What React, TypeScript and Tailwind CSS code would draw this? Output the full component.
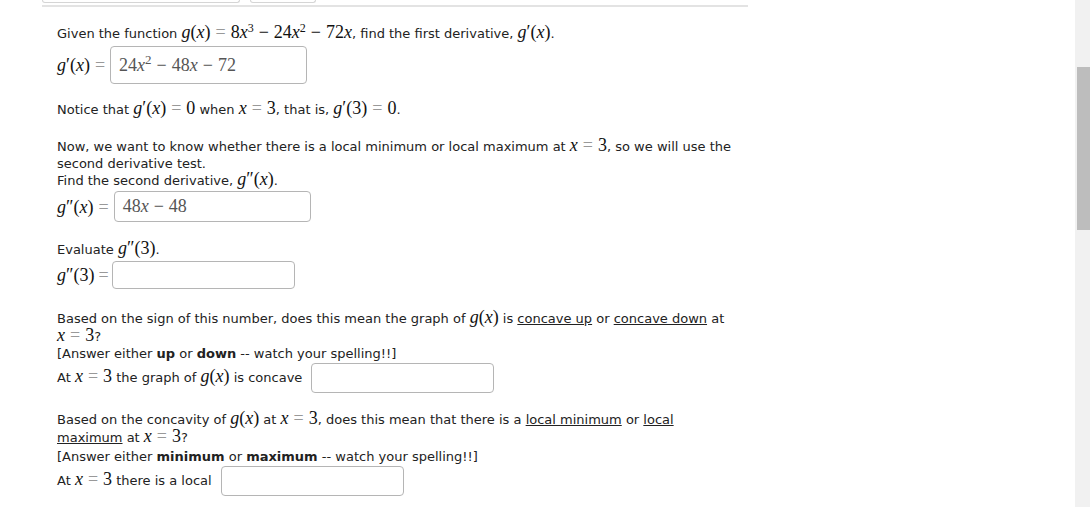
import type { ReactNode } from "react";

const sans = "[font-family:'DejaVu_Sans',Verdana,sans-serif]";
const serif = "[font-family:'Liberation_Serif','DejaVu_Serif',serif]";

// inline math inside running text: zero leading so it never stretches the line
function M({ children }: { children: ReactNode }) {
  return <span className={`${serif} text-[18px] leading-[0px] text-[#111]`}>{children}</span>;
}

// math label in front of an answer box
function ML({ children }: { children: ReactNode }) {
  return <span className={`${serif} text-[18px] leading-[20px] text-[#111]`}>{children}</span>;
}

function I({ children }: { children: ReactNode }) {
  return <i className="italic">{children}</i>;
}

function Eq() {
  return <span className="mx-[5px] text-[#999]">=</span>;
}

function Minus() {
  return <span className="mx-[5px]">−</span>;
}

function AnswerBox({
  width,
  height,
  value,
}: {
  width: string;
  height: string;
  value?: ReactNode;
}) {
  return (
    <div
      className={`${width} ${height} flex items-center rounded-[4px] border border-[#b5b5b5] bg-white pl-[8px] ${serif} text-[18px] text-[#555]`}
    >
      {value}
    </div>
  );
}

export default function App() {
  return (
    <div className={`flex h-[507px] w-[1090px] overflow-hidden bg-white ${sans} text-[13px] text-[#222]`}>
      <div className="flex-1">
        <div className="flex gap-[10px] pl-[42px]">
          <div className="h-[3px] w-[198px] rounded-b-[4px] border border-t-0 border-[#d5d5d5]" />
          <div className="h-[3px] w-[66px] rounded-b-[4px] border border-t-0 border-[#d5d5d5]" />
        </div>
        <div className="ml-[42px] mt-[2px] w-[706px] border-t-2 border-[#e3e3e3]" />

        <div className="pl-[57px]">
          <p className="mt-[17px] leading-[20px]">
            Given the function{" "}
            <M>
              <I>g</I>(<I>x</I>)<Eq />8<I>x</I>
              <sup className="text-[12px]">3</sup>
              <Minus />
              24<I>x</I>
              <sup className="text-[12px]">2</sup>
              <Minus />
              72<I>x</I>
            </M>
            , find the first derivative,{" "}
            <M>
              <I>g</I>′(<I>x</I>)
            </M>
            .
          </p>
          <div className="mt-[2px] flex items-center">
            <ML>
              <I>g</I>′(<I>x</I>)<Eq />
            </ML>
            <AnswerBox
              width="w-[197px]"
              height="h-[38px]"
              value={
                <span>
                  24<I>x</I>
                  <sup className="text-[13px]">2</sup>
                  <Minus />
                  48<I>x</I>
                  <Minus />
                  72
                </span>
              }
            />
          </div>

          <p className="mt-[16px] leading-[20px]">
            Notice that{" "}
            <M>
              <I>g</I>′(<I>x</I>)<Eq />0
            </M>{" "}
            when{" "}
            <M>
              <I>x</I>
              <Eq />3
            </M>
            , that is,{" "}
            <M>
              <I>g</I>′(3)<Eq />0
            </M>
            .
          </p>

          <p className="mt-[18px] leading-[17px]">
            Now, we want to know whether there is a local minimum or local maximum at{" "}
            <M>
              <I>x</I>
              <Eq />3
            </M>
            , so we will use the
            <br />
            second derivative test.
            <br />
            Find the second derivative,{" "}
            <M>
              <I>g</I>″(<I>x</I>)
            </M>
            .
          </p>
          <div className="mt-[2px] flex items-center">
            <ML>
              <I>g</I>″(<I>x</I>)<Eq />
            </ML>
            <AnswerBox
              width="w-[197px]"
              height="h-[31px]"
              value={
                <span>
                  48<I>x</I>
                  <Minus />
                  48
                </span>
              }
            />
          </div>

          <p className="mt-[18px] leading-[20px]">
            Evaluate{" "}
            <M>
              <I>g</I>″(3)
            </M>
            .
          </p>
          <div className="mt-[1px] flex items-center">
            <ML>
              <I>g</I>″(3)<span className="ml-[4px] mr-[3px] text-[#999]">=</span>
            </ML>
            <AnswerBox width="w-[183px]" height="h-[28px]" />
          </div>

          <p className="mt-[21px] leading-[17.5px]">
            Based on the sign of this number, does this mean the graph of{" "}
            <M>
              <I>g</I>(<I>x</I>)
            </M>{" "}
            is <span className="underline">concave up</span> or{" "}
            <span className="underline">concave down</span> at
            <br />
            <M>
              <I>x</I>
              <Eq />3
            </M>
            ?
            <br />
            [Answer either <b>up</b> or <b>down</b> -- watch your spelling!!]
          </p>
          <div className="flex items-center">
            <span className="mr-[9px] leading-[20px]">
              At{" "}
              <M>
                <I>x</I>
                <Eq />3
              </M>{" "}
              the graph of{" "}
              <M>
                <I>g</I>(<I>x</I>)
              </M>{" "}
              is concave
            </span>
            <AnswerBox width="w-[183px]" height="h-[30px]" />
          </div>

          <p className="mt-[18px] leading-[18.5px]">
            Based on the concavity of{" "}
            <M>
              <I>g</I>(<I>x</I>)
            </M>{" "}
            at{" "}
            <M>
              <I>x</I>
              <Eq />3
            </M>
            , does this mean that there is a{" "}
            <span className="underline">local minimum</span> or{" "}
            <span className="underline">local</span>
            <br />
            <span className="underline">maximum</span> at{" "}
            <M>
              <I>x</I>
              <Eq />3
            </M>
            ?
            <br />
            [Answer either <b>minimum</b> or <b>maximum</b> -- watch your spelling!!]
          </p>
          <div className="flex items-center">
            <span className="mr-[9px] leading-[20px]">
              At{" "}
              <M>
                <I>x</I>
                <Eq />3
              </M>{" "}
              there is a local
            </span>
            <AnswerBox width="w-[183px]" height="h-[30px]" />
          </div>
        </div>
      </div>

      <div className="w-[15px] bg-[#f1f1f1] pt-[67px] pl-[2px]">
        <div className="h-[163px] bg-[#bdbdbd]" />
      </div>
    </div>
  );
}
